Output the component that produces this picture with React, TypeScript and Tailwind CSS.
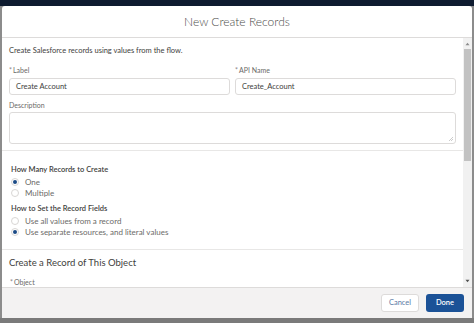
import React from 'react';

const font = { fontFamily: 'Lato, "Open Sans", sans-serif' };

const Radio: React.FC<{ checked?: boolean; label: string }> = ({ checked, label }) => (
  <div className="flex items-center h-[11px] gap-[6px] leading-none">
    <span className="w-[8px] h-[8px] rounded-full border border-[#d8d6d4] bg-white flex items-center justify-center">
      {checked && <span className="w-[4px] h-[4px] rounded-full bg-[#1b4a86]" />}
    </span>
    <span className="text-[8px] text-[#6b6a68]">{label}</span>
  </div>
);

const App: React.FC = () => {
  return (
    <div className="w-[474px] h-[323px] bg-[#8c8c8c] flex flex-col overflow-hidden" style={font}>
      <div className="h-[6px] bg-[#0e1b30]" />
      <div className="flex-1 flex pl-[2px] pr-[2px] min-h-0">
        <div className="w-[470px] bg-white flex flex-col rounded-t-[3px] overflow-hidden">
          {/* Header */}
          <div className="h-[32px] flex items-center justify-center border-b border-[#dddbda] shrink-0">
            <h2 className="text-[12px] font-light text-[#4a4a48]">New Create Records</h2>
          </div>

          {/* Body */}
          <div className="flex-1 flex min-h-0">
            <div className="flex-1 overflow-hidden">
              <div className="px-[7px] pt-[7px]">
                <p className="text-[7.5px] text-[#3e3e3c]">Create Salesforce records using values from the flow.</p>
                <div className="grid grid-cols-2 gap-[5px] mt-[9px]">
                  <div>
                    <label className="block text-[7px] text-[#6b6a68] mb-[2px]">
                      <span className="text-[#8a8886] mr-[1px]">*</span>Label
                    </label>
                    <div className="h-[17px] border border-[#dddbda] rounded-[3px] flex items-center px-[6px] text-[7.5px] text-[#3e3e3c]">
                      Create Account
                    </div>
                  </div>
                  <div>
                    <label className="block text-[7px] text-[#6b6a68] mb-[2px]">
                      <span className="text-[#8a8886] mr-[1px]">*</span>API Name
                    </label>
                    <div className="h-[17px] border border-[#dddbda] rounded-[3px] flex items-center px-[6px] text-[7.5px] text-[#3e3e3c]">
                      Create_Account
                    </div>
                  </div>
                </div>
                <label className="block text-[7px] text-[#6b6a68] mt-[5px] mb-[2px]">Description</label>
                <div className="h-[32px] border border-[#dddbda] rounded-[3px] relative">
                  <svg className="absolute right-[2px] bottom-[2px]" width="5" height="5" viewBox="0 0 5 5">
                    <path d="M5 1 L1 5 M5 3 L3 5" stroke="#aaa" strokeWidth="0.6" />
                  </svg>
                </div>
              </div>

              <div className="border-t border-[#e8e7e6] mt-[6px] px-[9px] pt-[14px] pb-[12px]">
                <p className="text-[7.5px] leading-[10px] font-semibold text-[#3e3e3c] mb-[1px]">How Many Records to Create</p>
                <Radio checked label="One" />
                <Radio label="Multiple" />
                <p className="text-[7.5px] leading-[10px] font-semibold text-[#3e3e3c] mt-[6px] mb-[1px]">How to Set the Record Fields</p>
                <Radio label="Use all values from a record" />
                <Radio checked label="Use separate resources, and literal values" />
              </div>

              <div className="border-t border-[#e8e7e6] px-[7px] pt-[6px]">
                <h3 className="text-[9.5px] text-[#3e3e3c]">Create a Record of This Object</h3>
                <label className="block text-[7px] text-[#6b6a68] mt-[6px] ml-[1px]">
                  <span className="text-[#8a8886] mr-[1px]">*</span>Object
                </label>
              </div>
            </div>

            {/* Scrollbar */}
            <div className="w-[9px] bg-[#f1f1f1] flex flex-col items-center shrink-0">
              <svg className="mt-[4px]" width="5" height="4" viewBox="0 0 5 4">
                <path d="M2.5 0.8 L4.5 3.2 H0.5 Z" fill="#8a8a8a" />
              </svg>
              <div className="w-[7px] h-[112px] bg-[#c2c2c2] mt-[3px]" />
              <div className="flex-1" />
              <svg className="mb-[4px]" width="5" height="4" viewBox="0 0 5 4">
                <path d="M2.5 3.2 L4.5 0.8 H0.5 Z" fill="#505050" />
              </svg>
            </div>
          </div>

          {/* Footer */}
          <div className="h-[31px] shrink-0 bg-[#f3f2f2] border-t border-[#dddbda] flex items-center justify-end gap-[7px] pr-[8px]">
            <button className="h-[18px] w-[38px] bg-white border border-[#dddbda] rounded-[3px] text-[7.5px] text-[#5a7aa5]">
              Cancel
            </button>
            <button className="h-[18px] w-[38px] bg-[#1b5297] rounded-[3px] text-[7.5px] font-semibold text-white">
              Done
            </button>
          </div>
        </div>
      </div>
      <div className="h-[5px] bg-[#7a7a7a]" />
    </div>
  );
};

export default App;
